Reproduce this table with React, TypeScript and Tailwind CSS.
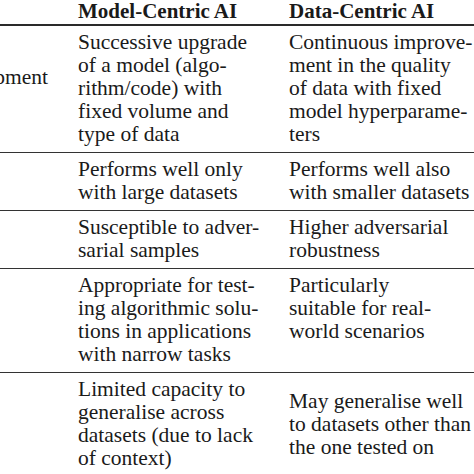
import React from "react";

type Row = {
  label: string;
  model: string[];
  data: string[];
  middle?: boolean;
};

const ROWS: Row[] = [
  {
    label: "Development",
    model: [
      "Successive upgrade",
      "of a model (algo-",
      "rithm/code) with",
      "fixed volume and",
      "type of data",
    ],
    data: [
      "Continuous improve-",
      "ment in the quality",
      "of data with fixed",
      "model hyperparame-",
      "ters",
    ],
  },
  {
    label: "",
    model: ["Performs well only", "with large datasets"],
    data: ["Performs well also", "with smaller datasets"],
  },
  {
    label: "",
    model: ["Susceptible to adver-", "sarial samples"],
    data: ["Higher adversarial", "robustness"],
  },
  {
    label: "",
    model: [
      "Appropriate for test-",
      "ing algorithmic solu-",
      "tions in applications",
      "with narrow tasks",
    ],
    data: ["Particularly", "suitable for real-", "world scenarios"],
  },
  {
    label: "",
    model: [
      "Limited capacity to",
      "generalise across",
      "datasets (due to lack",
      "of context)",
    ],
    data: [
      "May generalise well",
      "to datasets other than",
      "the one tested on",
    ],
    middle: true,
  },
];

function Lines({ lines }: { lines: string[] }) {
  return (
    <div className="flex flex-col">
      {lines.map((l, i) => (
        <div key={i} className="whitespace-nowrap leading-[23px]">
          {l}
        </div>
      ))}
    </div>
  );
}

export default function App() {
  return (
    <div
      className="w-[474px] h-[474px] overflow-hidden bg-white text-[#1a1a1a] text-[21.5px]"
      style={{ fontFamily: '"Liberation Serif", "Times New Roman", serif' }}
    >
      <div className="grid grid-cols-[70px_211px_1fr] h-[24px] font-bold leading-[22px] text-[21px]">
        <div />
        <div className="pl-2 whitespace-nowrap">Model-Centric AI</div>
        <div className="pl-2 whitespace-nowrap">Data-Centric AI</div>
      </div>
      <div className="h-[2px] bg-[#2a2a2a]" />
      {ROWS.map((row, i) => (
        <div
          key={i}
          className={`grid grid-cols-[70px_211px_1fr] pt-[5px] pb-[6px] ${
            i > 0 ? "border-t-[1.5px] border-[#333]" : ""
          }`}
        >
          <div className="flex items-center justify-end pr-[22px] overflow-hidden whitespace-nowrap leading-[23px] -mt-[22px]">
            {row.label}
          </div>
          <div className="pl-2">
            <Lines lines={row.model} />
          </div>
          <div className={`pl-2 flex ${row.middle ? "items-center" : "items-start"}`}>
            <Lines lines={row.data} />
          </div>
        </div>
      ))}
    </div>
  );
}
